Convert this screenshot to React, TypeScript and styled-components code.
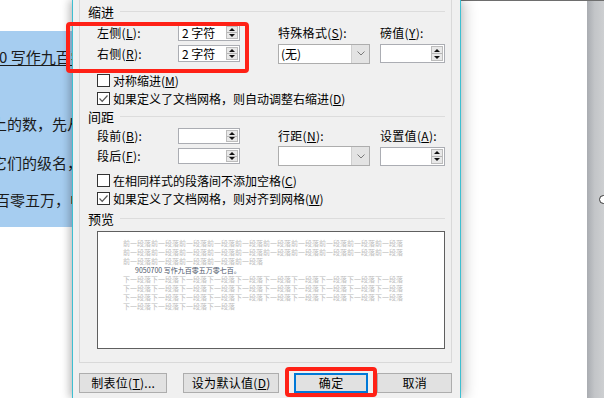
import React from 'react';
import styled, { createGlobalStyle } from 'styled-components';

const GlobalStyle = createGlobalStyle`
  html, body {
    margin: 0;
    padding: 0;
  }
  body {
    width: 604px;
    height: 398px;
    overflow: hidden;
    background: #fff;
    font-family: "Noto Sans CJK SC", "Noto Sans", sans-serif;
  }
`;

const Screen = styled.div`
  display: flex;
  width: 604px;
  height: 398px;
  overflow: hidden;
`;

/* document behind the dialog */
const DocPane = styled.div`
  width: 72px;
  flex: none;
  overflow: hidden;
  background: #fff;
  padding-top: 31px;
  box-sizing: border-box;
`;

const Highlight = styled.div`
  height: 196px;
  background: #a6cdf0;
  display: flex;
  flex-direction: column;
`;

const DocLine = styled.div<{ $top: number; $indent: number; $underline?: boolean }>`
  margin-top: ${(p) => p.$top}px;
  margin-left: ${(p) => p.$indent}px;
  font-size: 15px;
  line-height: 20px;
  color: #1b1b1b;
  white-space: nowrap;
  text-decoration: ${(p) => (p.$underline ? 'underline' : 'none')};
  text-underline-offset: 2px;
`;

/* dialog */
const Dialog = styled.div`
  width: 389px;
  flex: none;
  box-sizing: border-box;
  border-left: 1px solid #3dbfd1;
  border-right: 1px solid #3dbfd1;
  background: #f0f0f0;
  position: relative;
  z-index: 1;
  box-shadow: -3px 0 8px rgba(0, 0, 0, 0.22), 5px 0 12px rgba(0, 0, 0, 0.18);
  padding: 0 8px 0 6px;
  display: flex;
  flex-direction: column;
  font-size: 12px;
  color: #000;
`;

const Panel = styled.div`
  height: 363px;
  box-sizing: border-box;
  border: 1px solid #d9d9d9;
  border-top: none;
  padding: 0 6px 0 8px;
  display: flex;
  flex-direction: column;
`;

const GroupHeader = styled.div<{ $height: number }>`
  height: ${(p) => p.$height}px;
  display: flex;
  align-items: center;
  gap: 6px;
  font-size: 13px;
  &::after {
    content: '';
    flex: 1;
    height: 1px;
    background: #dcdcdc;
  }
`;

const Body = styled.div<{ $top?: number }>`
  padding-left: 9px;
  margin-top: ${(p) => p.$top ?? 0}px;
  display: flex;
  flex-direction: column;
  position: relative;
`;

const FieldGrid = styled.div<{ $row: number }>`
  display: grid;
  grid-template-columns: 81px 100px 102px 65px;
  grid-auto-rows: ${(p) => p.$row}px;
  align-items: center;
`;

const Label = styled.span`
  white-space: nowrap;
  line-height: 16px;
  letter-spacing: 0.3px;
`;

const SpinField = styled.div<{ $width: number; $height: number }>`
  width: ${(p) => p.$width}px;
  height: ${(p) => p.$height}px;
  box-sizing: border-box;
  border: 1px solid #abadb3;
  background: #fff;
  display: flex;
  align-items: stretch;
  padding: 1px;
`;

const FieldText = styled.span`
  flex: 1;
  padding-left: 2px;
  line-height: 14px;
  white-space: nowrap;
  align-self: center;
`;

const SpinButtons = styled.div`
  width: 12px;
  box-sizing: border-box;
  border: 1px solid #bcbcbc;
  display: flex;
  flex-direction: column;
`;

const SpinHalf = styled.div<{ $down?: boolean }>`
  flex: 1;
  background: #e8e8e8;
  display: flex;
  align-items: center;
  justify-content: center;
  border-top: ${(p) => (p.$down ? '1px solid #b5b5b5' : 'none')};
  &::before {
    content: '';
    border-left: 3px solid transparent;
    border-right: 3px solid transparent;
    ${(p) => (p.$down ? 'border-top: 3px solid #111;' : 'border-bottom: 3px solid #111;')}
  }
`;

const DropField = styled.div<{ $width: number }>`
  width: ${(p) => p.$width}px;
  height: 20px;
  box-sizing: border-box;
  border: 1px solid #adadad;
  background: #fff;
  display: flex;
  align-items: stretch;
`;

const DropArrow = styled.div`
  width: 17px;
  background: #e3e3e3;
  border-left: 1px solid #cfcfcf;
  display: flex;
  align-items: center;
  justify-content: center;
`;

const CheckRow = styled.label`
  height: 18px;
  display: flex;
  align-items: center;
  gap: 3px;
  white-space: nowrap;
`;

const Box = styled.span`
  width: 13px;
  height: 13px;
  box-sizing: border-box;
  border: 1px solid #333;
  background: #fff;
  display: flex;
  align-items: center;
  justify-content: center;
`;

const Preview = styled.div`
  margin-top: 2px;
  height: 118px;
  box-sizing: border-box;
  border: 1px solid #5f5f5f;
  background: #fff;
  padding: 7px 0 0 25px;
  display: flex;
  flex-direction: column;
  overflow: hidden;
`;

const PreviewLine = styled.div<{ $sample?: boolean }>`
  font-size: 7px;
  line-height: 9px;
  height: 9px;
  white-space: nowrap;
  color: ${(p) => (p.$sample ? '#4b5468' : '#bdbdbd')};
  padding-left: ${(p) => (p.$sample ? 12 : 0)}px;
`;

const ButtonBar = styled.div`
  margin-top: 10px;
  display: flex;
  align-items: center;
`;

const Button = styled.button<{ $width: number; $gap: number; $primary?: boolean }>`
  width: ${(p) => p.$width}px;
  height: 20px;
  margin-left: ${(p) => p.$gap}px;
  box-sizing: border-box;
  border: ${(p) => (p.$primary ? '2px solid #0078d7' : '1px solid #adadad')};
  background: #e1e1e1;
  font-family: inherit;
  font-size: 12px;
  letter-spacing: 0.3px;
  color: #000;
  padding: 0;
  position: relative;
  line-height: 16px;
`;

const RedMark = styled.span<{ $l: number; $t: number; $w: number; $h: number }>`
  position: absolute;
  left: ${(p) => p.$l}px;
  top: ${(p) => p.$t}px;
  width: ${(p) => p.$w}px;
  height: ${(p) => p.$h}px;
  box-sizing: border-box;
  border: 4px solid #ff2116;
  border-radius: 4px;
  pointer-events: none;
`;

/* right side of the window */
const SidePane = styled.div`
  flex: 1;
  display: flex;
  border-top: 1px solid #6e6e6e;
  background: #fff;
`;

const SideBlank = styled.div`
  flex: 1;
`;

const ScrollStrip = styled.div`
  width: 17px;
  background: linear-gradient(to right, #a9acb1, #c3c5c8 45%, #cdcfd1);
  display: flex;
  align-items: center;
  justify-content: flex-end;
`;

const Handle = styled.span`
  width: 7px;
  height: 7px;
  margin-right: -4px;
  border: 1px solid #333;
  border-radius: 50%;
  background: #fff;
`;

const U = styled.u`
  text-underline-offset: 1px;
`;

const Spin = ({ value, width, height }: { value?: string; width: number; height: number }) => (
  <SpinField $width={width} $height={height}>
    <FieldText>{value}</FieldText>
    <SpinButtons>
      <SpinHalf />
      <SpinHalf $down />
    </SpinButtons>
  </SpinField>
);

const Select = ({ value }: { value?: string }) => (
  <DropField $width={92}>
    <FieldText>{value}</FieldText>
    <DropArrow>
      <svg width="8" height="5" viewBox="0 0 8 5">
        <path d="M0.5 0.5 L4 4 L7.5 0.5" fill="none" stroke="#7a7a7a" strokeWidth="1" />
      </svg>
    </DropArrow>
  </DropField>
);

const Check = ({ checked, children }: { checked?: boolean; children: React.ReactNode }) => (
  <CheckRow>
    <Box>
      {checked && (
        <svg width="11" height="11" viewBox="0 0 11 11">
          <path d="M1.5 5.5 L4.2 8.3 L9.5 2.5" fill="none" stroke="#555" strokeWidth="1.2" />
        </svg>
      )}
    </Box>
    <span>{children}</span>
  </CheckRow>
);

const before = ['前一段落'.repeat(10), '前一段落'.repeat(10), '前一段落'.repeat(5)];
const after = ['下一段落'.repeat(10), '下一段落'.repeat(10), '下一段落'.repeat(10), '下一段落'.repeat(4)];

const App = () => (
  <>
    <GlobalStyle />
    <Screen>
      <DocPane>
        <Highlight>
          <DocLine $top={16} $indent={-51} $underline>
            9050700 写作九百零五万零七百
          </DocLine>
          <DocLine $top={47} $indent={-8}>
            上的数，先从
          </DocLine>
          <DocLine $top={19} $indent={-8}>
            它们的级名，
          </DocLine>
          <DocLine $top={17} $indent={-5}>
            百零五万，中
          </DocLine>
        </Highlight>
      </DocPane>

      <Dialog>
        <Panel>
          <GroupHeader $height={22}>缩进</GroupHeader>
          <Body>
            <FieldGrid $row={21}>
              <Label>
                左侧(<U>L</U>):
              </Label>
              <Spin value="2 字符" width={62} height={17} />
              <Label>
                特殊格式(<U>S</U>):
              </Label>
              <Label>
                磅值(<U>Y</U>):
              </Label>
              <Label>
                右侧(<U>R</U>):
              </Label>
              <Spin value="2 字符" width={62} height={17} />
              <Select value="(无)" />
              <Spin width={65} height={19} />
            </FieldGrid>
            <RedMark $l={-22} $t={0} $w={183} $h={51} />
          </Body>
          <Body $top={7}>
            <Check>
              对称缩进(<U>M</U>)
            </Check>
            <Check checked>
              如果定义了文档网格，则自动调整右缩进(<U>D</U>)
            </Check>
          </Body>
          <GroupHeader $height={19}>间距</GroupHeader>
          <Body>
            <FieldGrid $row={20}>
              <Label>
                段前(<U>B</U>):
              </Label>
              <Spin width={62} height={16} />
              <Label>
                行距(<U>N</U>):
              </Label>
              <Label>
                设置值(<U>A</U>):
              </Label>
              <Label>
                段后(<U>F</U>):
              </Label>
              <Spin width={62} height={16} />
              <Select />
              <Spin width={65} height={19} />
            </FieldGrid>
          </Body>
          <Body $top={5}>
            <Check>
              在相同样式的段落间不添加空格(<U>C</U>)
            </Check>
            <Check checked>
              如果定义了文档网格，则对齐到网格(<U>W</U>)
            </Check>
          </Body>
          <GroupHeader $height={22}>预览</GroupHeader>
          <Body>
            <Preview>
              {before.map((t, i) => (
                <PreviewLine key={`b${i}`}>{t}</PreviewLine>
              ))}
              <PreviewLine $sample>9050700 写作九百零五万零七百。</PreviewLine>
              {after.map((t, i) => (
                <PreviewLine key={`a${i}`}>{t}</PreviewLine>
              ))}
            </Preview>
          </Body>
        </Panel>
        <ButtonBar>
          <Button $width={89} $gap={0}>
            制表位(<U>T</U>)...
          </Button>
          <Button $width={96} $gap={16}>
            设为默认值(<U>D</U>)
          </Button>
          <Button $width={75} $gap={15} $primary>
            确定
            <RedMark $l={-11} $t={-8} $w={92} $h={30} />
          </Button>
          <Button $width={75} $gap={9}>
            取消
          </Button>
        </ButtonBar>
      </Dialog>

      <SidePane>
        <SideBlank />
        <ScrollStrip>
          <Handle />
        </ScrollStrip>
      </SidePane>
    </Screen>
  </>
);

export default App;
